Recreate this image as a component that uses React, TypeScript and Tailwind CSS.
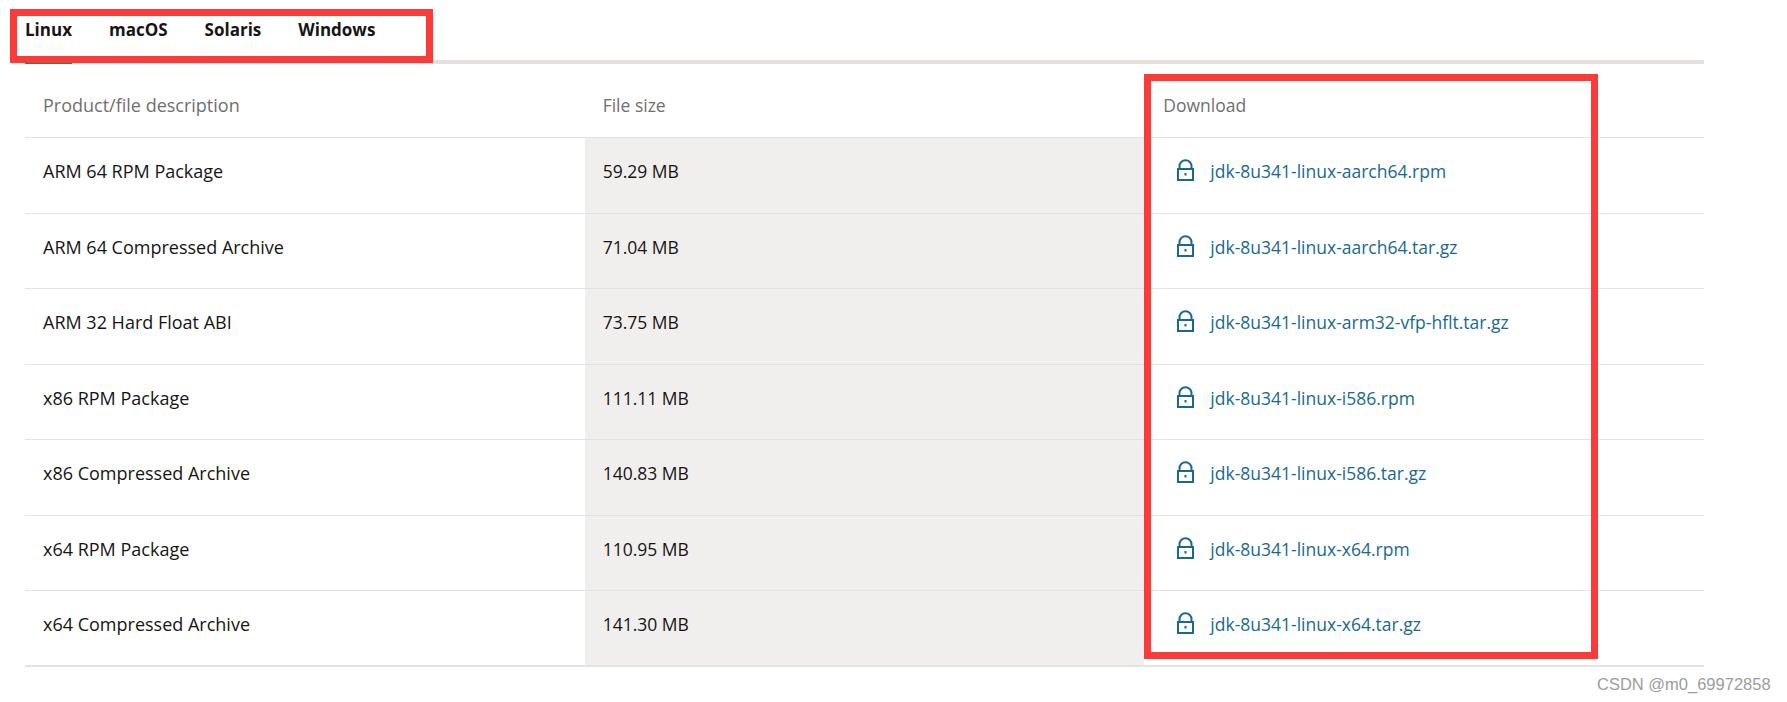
const tabs = ["Linux", "macOS", "Solaris", "Windows"];

const rows = [
  ["ARM 64 RPM Package", "59.29 MB", "jdk-8u341-linux-aarch64.rpm"],
  ["ARM 64 Compressed Archive", "71.04 MB", "jdk-8u341-linux-aarch64.tar.gz"],
  ["ARM 32 Hard Float ABI", "73.75 MB", "jdk-8u341-linux-arm32-vfp-hflt.tar.gz"],
  ["x86 RPM Package", "111.11 MB", "jdk-8u341-linux-i586.rpm"],
  ["x86 Compressed Archive", "140.83 MB", "jdk-8u341-linux-i586.tar.gz"],
  ["x64 RPM Package", "110.95 MB", "jdk-8u341-linux-x64.rpm"],
  ["x64 Compressed Archive", "141.30 MB", "jdk-8u341-linux-x64.tar.gz"],
];

function LockIcon() {
  return (
    <svg width="17" height="22" viewBox="0 0 17 22" fill="none" className="shrink-0 text-[#19698c]">
      <path d="M2.5 10V7.2a6 6 0 0 1 12 0V10" stroke="currentColor" strokeWidth="2" />
      <rect x="1" y="10" width="15" height="11" stroke="currentColor" strokeWidth="2" />
      <rect x="7.5" y="14" width="2" height="2.5" fill="currentColor" />
    </svg>
  );
}

export default function App() {
  return (
    <div className="relative h-[702px] w-full overflow-hidden bg-white font-['Open_Sans',sans-serif] text-[#161513]">
      <div className="ml-[25px] w-[1679px]">
        <nav className="box-border flex h-[64px] gap-[37px] border-b-4 border-[#e4e1dd]">
          {tabs.map((tab, i) => (
            <div key={tab} className="relative pt-[18px] text-[17px] font-bold leading-[23px]">
              {tab}
              {i === 0 ? <span className="absolute -bottom-[4px] left-0 right-0 h-[4px] bg-[#4e6e50]" /> : null}
            </div>
          ))}
        </nav>

        <div className="box-border grid h-[74px] grid-cols-3 border-b border-[#e3e3e3] text-[#6f6f6f]">
          <div className="pl-[18px] pt-[29px] text-[18px] leading-[24px]">Product/file description</div>
          <div className="pl-[18px] pt-[29px] text-[17.5px] leading-[24px]">File size</div>
          <div className="pl-[19px] pt-[29px] text-[17.5px] leading-[24px]">Download</div>
        </div>

        {rows.map(([name, size, file], i) => (
          <div
            key={file}
            className={`box-border grid h-[75.5px] grid-cols-3 border-[#e3e3e3] ${i === rows.length - 1 ? "border-b-2" : "border-b"}`}
          >
            <div className="pl-[18px] pt-[21px] text-[18px] leading-[24px]">{name}</div>
            <div className="bg-[#f1efed] pl-[18px] pt-[21px] text-[17.5px] leading-[24px]">{size}</div>
            <div className="flex items-start gap-[16px] pl-[33px] pt-[21px]">
              <LockIcon />
              <a href="#" className="text-[17.5px] leading-[24px] text-[#19698c]">
                {file}
              </a>
            </div>
          </div>
        ))}
      </div>

      {/* annotation boxes drawn over the page */}
      <div className="pointer-events-none absolute left-[10px] top-[9px] h-[54px] w-[423px] border-[7px] border-[#fb3a3a]" />
      <div className="pointer-events-none absolute left-[1144px] top-[74px] h-[585px] w-[454px] border-[7px] border-[#fb3a3a]" />

      <div className="absolute left-[1597px] top-[674px] font-['Liberation_Sans',Arial,sans-serif] text-[16.5px] leading-[20px] text-[#9c9c9c]">
        CSDN @m0_69972858
      </div>
    </div>
  );
}
